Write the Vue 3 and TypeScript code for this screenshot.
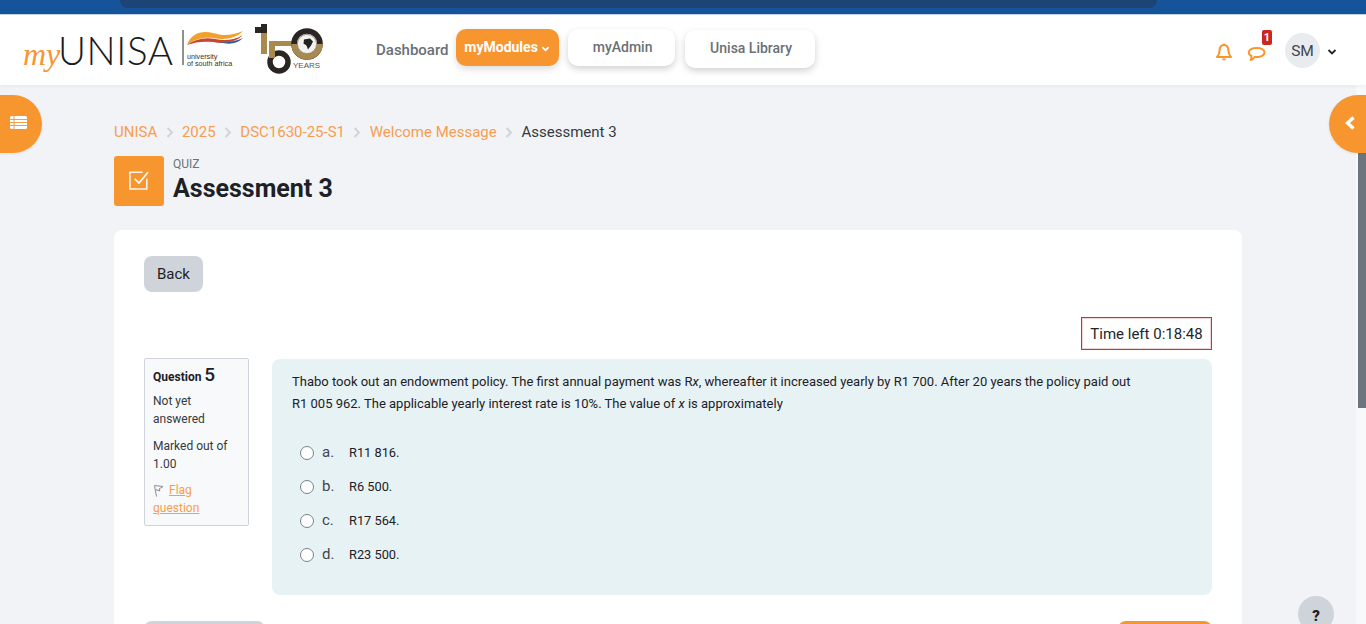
<script setup lang="ts">
interface Crumb { label: string; link: boolean }
interface Option { key: string; text: string }

const crumbs: Crumb[] = [
  { label: 'UNISA', link: true },
  { label: '2025', link: true },
  { label: 'DSC1630-25-S1', link: true },
  { label: 'Welcome Message', link: true },
  { label: 'Assessment 3', link: false },
]

const options: Option[] = [
  { key: 'a.', text: 'R11 816.' },
  { key: 'b.', text: 'R6 500.' },
  { key: 'c.', text: 'R17 564.' },
  { key: 'd.', text: 'R23 500.' },
]
</script>

<template>
  <div class="app">
    <div class="topbar"><div class="toppill"></div></div>

    <header class="header">
      <svg class="logo" width="310" height="60" viewBox="0 0 310 60">
        <text x="0" y="41" class="logo-my">my</text>
        <text x="35" y="41" class="logo-unisa">UNISA</text>
        <rect x="159.5" y="6" width="1" height="35" fill="#222" />
        <path d="M164 21 C168 10 178 6 190 9 C200 12 208 12 220 7 C212 15 202 16 190 14 C180 13 172 15 164 21 Z" fill="#f2a02a" />
        <path d="M164 21 C172 15 182 13 192 15 C202 17 212 16 220 11 C212 19 200 20 190 18 C180 17 172 18 164 21 Z" fill="#c8452f" />
        <path d="M196 18 C205 19 213 17 220 14 C214 20 206 21 196 18 Z" fill="#2d5b9a" />
        <text x="164" y="34.5" class="logo-small">university</text>
        <text x="164" y="41.5" class="logo-small">of south africa</text>
        <!-- 150 years emblem -->
        <path d="M232 3 L238 3 L238 0 L244 0 L244 9 L232 9 Z" fill="#2a2522" />
        <rect x="238" y="9" width="6" height="21" fill="#a98a4e" />
        <circle cx="256" cy="38" r="9" fill="none" stroke="#2a2522" stroke-width="5.5" />
        <rect x="246" y="17" width="6" height="17" fill="#a98a4e" />
        <rect x="246" y="17" width="28" height="5" fill="#a98a4e" />
        <circle cx="284" cy="20" r="13" fill="none" stroke="#2a2522" stroke-width="5.6" />
        <path d="M268.3 20 A15.7 15.7 0 0 0 299.7 20 L294 20 A10 10 0 0 1 274 20 Z" fill="#a98a4e" />
        <circle cx="284" cy="20" r="9.6" fill="#f4f2ec" stroke="#777" stroke-width="0.8" />
        <path d="M281 15.5 l6 -1 l3 3 l-2 4 l-3 4 l-1.5 -4 l-3 -2 Z" fill="#222" />
        <text x="270" y="44" class="logo-years">YEARS</text>
      </svg>

      <nav class="nav">
        <a class="nav-plain">Dashboard</a>
        <a class="nav-btn nav-active">
          myModules
          <svg width="9" height="9" viewBox="0 0 10 10"><path d="M1.5 3.5 L5 7 L8.5 3.5" fill="none" stroke="#fff" stroke-width="2" /></svg>
        </a>
        <a class="nav-btn nav-admin">myAdmin</a>
        <a class="nav-btn nav-lib">Unisa Library</a>
      </nav>

      <div class="user">
        <svg class="bell" width="18" height="19" viewBox="0 0 18 19">
          <path d="M9 2 C5.8 2 4.6 4.6 4.6 7.5 C4.6 11 3.6 12.4 2 14 L16 14 C14.4 12.4 13.4 11 13.4 7.5 C13.4 4.6 12.2 2 9 2 Z" fill="none" stroke="#f7962f" stroke-width="2" stroke-linejoin="round" />
          <path d="M7 15.5 a2 2 0 0 0 4 0 Z" fill="#f7962f" />
          <circle cx="9" cy="1.6" r="1.2" fill="#f7962f" />
        </svg>
        <div class="chat">
          <svg width="19" height="18" viewBox="0 0 19 18">
            <path d="M9.8 3 C14 3 17.5 4.8 17.5 7.5 C17.5 10.2 14 12 9.8 12 C9 12 8.4 12 7.6 11.9 C6.8 13.2 5.6 14.4 3.6 15 C4.4 13.6 4.6 12.4 4.4 11 C2.8 10.2 1.8 9 1.8 7.5 C1.8 4.8 5.4 3 9.8 3 Z" fill="none" stroke="#f7962f" stroke-width="2" stroke-linejoin="round" />
          </svg>
          <span class="badge">1</span>
        </div>
        <span class="avatar">SM</span>
        <svg class="caret" width="10" height="10" viewBox="0 0 10 10"><path d="M1.5 3 L5 6.5 L8.5 3" fill="none" stroke="#212529" stroke-width="1.8" /></svg>
      </div>
    </header>

    <div class="body">
      <main class="main">
        <ol class="crumbs">
          <li v-for="(c, i) in crumbs" :key="c.label" class="crumb">
            <svg v-if="i > 0" class="crumb-sep" width="8" height="11" viewBox="0 0 8 11"><path d="M1.5 1 L6 5.5 L1.5 10" fill="none" stroke="#ced4da" stroke-width="2" /></svg>
            <span :class="c.link ? 'crumb-link' : 'crumb-current'">{{ c.label }}</span>
          </li>
        </ol>

        <div class="title-row">
          <div class="quiz-icon">
            <svg width="24" height="24" viewBox="0 0 20 20">
              <path d="M16.5 9 V17.5 H2.5 V3.5 H13" fill="none" stroke="#fff" stroke-width="1.3" opacity="0.9" />
              <path d="M6.5 9 L10 12.5 L17.5 3.5" fill="none" stroke="#fff" stroke-width="1.4" />
            </svg>
          </div>
          <div class="title-text">
            <div class="quiz-label">QUIZ</div>
            <h1 class="quiz-title">Assessment 3</h1>
          </div>
        </div>

        <section class="card">
          <button class="back">Back</button>
          <div class="timer-row"><div class="timer">Time left 0:18:48</div></div>

          <div class="question">
            <aside class="info">
              <div class="qno">Question <span class="qnum">5</span></div>
              <p class="info-p status-p">Not yet answered</p>
              <p class="info-p mark-p">Marked out of 1.00</p>
              <p class="info-p">
                <svg class="flag" width="11" height="13" viewBox="0 0 11 13"><path d="M1.5 1.5 L10 2.5 L6 5 L7 7 L2.5 5.5 M1.5 1.5 L3.5 12.5" fill="none" stroke="#8a8f94" stroke-width="1" /></svg>
                <a class="flag-link">Flag question</a>
              </p>
            </aside>

            <div class="content">
              <p class="qtext">Thabo took out an endowment policy. The first annual payment was R<em>x</em>, whereafter it increased yearly by R1 700. After 20 years the policy paid out<br />R1 005 962. The applicable yearly interest rate is 10%. The value of <em>x</em> is approximately</p>
              <div class="options">
                <label v-for="o in options" :key="o.key" class="option">
                  <span class="radio"></span>
                  <span class="opt-key">{{ o.key }}</span>
                  <span class="opt-text">{{ o.text }}</span>
                </label>
              </div>
            </div>
          </div>

          <div class="actions">
            <button class="act act-prev"></button>
            <button class="act act-next"></button>
          </div>
        </section>
      </main>
      <div class="scrollbar"><div class="thumb"></div></div>
    </div>

    <button class="float float-left">
      <svg width="17" height="13" viewBox="0 0 17 13">
        <rect x="0" y="0" width="17" height="13" rx="1.5" fill="#fff" />
        <path d="M0 3.5 H17 M0 6.5 H17 M0 9.5 H17 M4 0 V13" stroke="#f7962f" stroke-width="0.9" />
      </svg>
    </button>
    <button class="float float-right">
      <svg width="12" height="14" viewBox="0 0 12 14"><path d="M9.5 1.5 L3.5 7 L9.5 12.5" fill="none" stroke="#fff" stroke-width="3.4" /></svg>
    </button>
    <button class="help">?</button>
  </div>
</template>

<style>
html, body { margin: 0; overflow: hidden; }
</style>

<style scoped>
.app {
  position: relative;
  width: 1366px;
  height: 624px;
  overflow: hidden;
  background: #f1f3f7;
  font-family: Roboto, "Liberation Sans", sans-serif;
  color: #1d2125;
}
.topbar {
  height: 14px;
  background: #15549a;
  border-bottom: 1px solid #c3d4e8;
  padding: 0 209px 0 120px;
}
.toppill {
  height: 8px;
  background: #1c4475;
  border-radius: 0 0 16px 16px;
}
.header {
  position: relative;
  z-index: 1;
  height: 70px;
  background: #fff;
  display: flex;
  align-items: flex-start;
  box-shadow: 0 1px 4px rgba(0, 0, 0, 0.05);
}
.logo { margin: 9px 0 0 23px; flex: none; }
.logo-my { font: italic 32px "Liberation Serif", serif; fill: #f7962f; }
.logo-unisa { font: 300 38.5px Lato, "Liberation Sans", sans-serif; fill: #1b1b1b; letter-spacing: 0.6px; }
.logo-small { font: 7.2px "Liberation Sans", sans-serif; fill: #333; }
.logo-years { font: 8px "Liberation Sans", sans-serif; fill: #555; }
.nav { display: flex; align-items: flex-start; margin-left: 43px; padding-top: 14px; }
.nav-plain {
  font-size: 15px;
  font-weight: 500;
  color: #6a7076;
  padding-top: 12px;
  margin-right: 7px;
}
.nav-btn {
  display: flex;
  align-items: center;
  justify-content: center;
  height: 37px;
  box-sizing: border-box;
  border-radius: 10px;
  font-size: 14px;
  font-weight: 500;
  background: #fff;
  color: #6a7076;
  box-shadow: 0 3px 7px rgba(0, 0, 0, 0.18);
  padding-bottom: 2px;
}
.nav-active { width: 103px; background: #f7962f; color: #fff; font-weight: 700; gap: 3px; margin-right: 9px; box-shadow: 0 3px 7px rgba(0, 0, 0, 0.14); }
.nav-active svg { margin-top: 3px; }
.nav-admin { width: 107px; margin-right: 10px; padding-left: 3px; }
.nav-lib { width: 130px; height: 38px; margin-top: 1px; padding-left: 3px; }
.user {
  margin-left: auto;
  margin-right: 29px;
  padding-top: 18px;
  display: flex;
  align-items: center;
}
.bell { margin-top: 3px; margin-right: 14px; }
.chat { position: relative; width: 19px; height: 18px; margin-top: 6px; margin-right: 19px; }
.chat svg { display: block; }
.badge {
  position: absolute;
  left: 15px;
  top: -15px;
  width: 10px;
  height: 15px;
  background: #c9281e;
  border-radius: 2px;
  color: #fff;
  font-size: 11px;
  font-weight: 700;
  text-align: center;
  line-height: 15px;
}
.avatar {
  width: 35px;
  height: 35px;
  border-radius: 50%;
  background: #e9ecef;
  color: #40464c;
  font-size: 15.5px;
  display: flex;
  align-items: center;
  justify-content: center;
  margin-right: 7px;
}
.caret { margin-top: 3px; }
.body { display: flex; height: 539px; }
.main { flex: 1; padding: 38px 114px 0; min-width: 0; }
.crumbs {
  list-style: none;
  margin: 0;
  padding: 0;
  display: flex;
  align-items: center;
  height: 18px;
  font-size: 15px;
}
.crumb { display: flex; align-items: center; white-space: nowrap; }
.crumb-sep { margin: 0 8.35px; }
.crumb-link { color: #f79d4f; }
.crumb-current { color: #343a40; }
.title-row { display: flex; margin-top: 15px; }
.quiz-icon {
  width: 50px;
  height: 50px;
  border-radius: 3px;
  background: #f7962f;
  display: flex;
  align-items: center;
  justify-content: center;
  padding-bottom: 2px;
  box-sizing: border-box;
}
.title-text { margin-left: 9px; }
.quiz-label { font-size: 12px; color: #6a737b; line-height: 14px; margin-top: 1px; }
.quiz-title { margin: 0; font-size: 25px; font-weight: 700; line-height: 30px; margin-top: 3px; color: #1d2125; }
.card {
  margin-top: 24px;
  background: #fff;
  border-radius: 8px;
  padding: 26px 30px 0;
  height: 500px;
  box-sizing: border-box;
}
.back {
  display: block;
  width: 59px;
  height: 36px;
  border: 0;
  border-radius: 8px;
  background: #ced4da;
  color: #1d2125;
  font: 15px Roboto, sans-serif;
  padding: 0;
}
.timer-row { display: flex; justify-content: flex-end; margin-top: 25px; }
.timer {
  width: 131px;
  height: 33px;
  box-sizing: border-box;
  border: 1px solid #c8322f;
  box-shadow: inset 0 0 0 1px rgba(200, 50, 47, 0.2);
  font-size: 15px;
  display: flex;
  align-items: center;
  justify-content: center;
  color: #212529;
}
.question { display: flex; align-items: flex-start; margin-top: 8px; }
.info {
  width: 105px;
  height: 168px;
  flex: none;
  box-sizing: border-box;
  background: #f8f9fa;
  border: 1px solid #ced4da;
  border-radius: 2px;
  padding: 4px 8px;
  font-size: 12px;
  line-height: 18px;
  color: #343a40;
}
.qno { font-weight: 700; font-size: 12px; color: #1d2125; line-height: 24px; }
.qnum { font-size: 19px; font-weight: 500; }
.info-p { margin: 0; }
.status-p { margin-top: 3px; margin-bottom: 9px; }
.mark-p { margin-bottom: 8px; }
.flag { vertical-align: -3px; margin-right: 5px; }
.flag-link { color: #f79d4f; text-decoration: underline; }
.content {
  flex: 1;
  margin-left: 23px;
  margin-top: 1px;
  height: 236px;
  background: #e7f2f5;
  border-radius: 8px;
  padding: 12px 20px;
  box-sizing: border-box;
}
.qtext { margin: 0; font-size: 13px; line-height: 22px; color: #1d2125; }
.options { margin-top: 20px; }
.option { display: flex; align-items: center; height: 34px; margin-left: 8px; }
.radio {
  width: 12px;
  height: 12px;
  border: 1px solid #7b8186;
  border-radius: 50%;
  background: #fff;
  margin-right: 8px;
  margin-top: 2px;
  box-sizing: content-box;
}
.opt-key { width: 27px; font-size: 15px; color: #40464c; }
.opt-text { font-size: 12.8px; color: #1d2125; }
.actions { display: flex; justify-content: space-between; margin-top: 26px; }
.act { height: 36px; border: 0; border-radius: 8px; padding: 0; }
.act-prev { width: 121px; background: #ced4da; }
.act-next { width: 94px; background: #f7962f; }
.scrollbar { width: 10px; flex: none; background: #f8f9fa; display: flex; justify-content: flex-end; }
.thumb { width: 8px; height: 256px; margin-top: 67px; background: #6c757d; }
.float {
  position: absolute;
  top: 95px;
  height: 58px;
  border: 0;
  background: #f7962f;
  display: flex;
  align-items: center;
  padding: 0;
  z-index: 2;
  box-shadow: 0 1px 3px rgba(0, 0, 0, 0.08);
}
.float-left { left: 0; width: 42px; border-radius: 0 29px 29px 0; padding-left: 10px; padding-bottom: 3px; }
.float-right { right: 0; width: 37px; border-radius: 29px 0 0 29px; padding-left: 15px; padding-bottom: 3px; }
.help {
  position: absolute;
  left: 1298px;
  top: 596px;
  width: 36px;
  height: 36px;
  border: 0;
  border-radius: 50%;
  background: #ced4da;
  color: #1d2125;
  font: 900 15px Roboto, sans-serif;
  padding: 4px 0 0;
  z-index: 2;
}
</style>
